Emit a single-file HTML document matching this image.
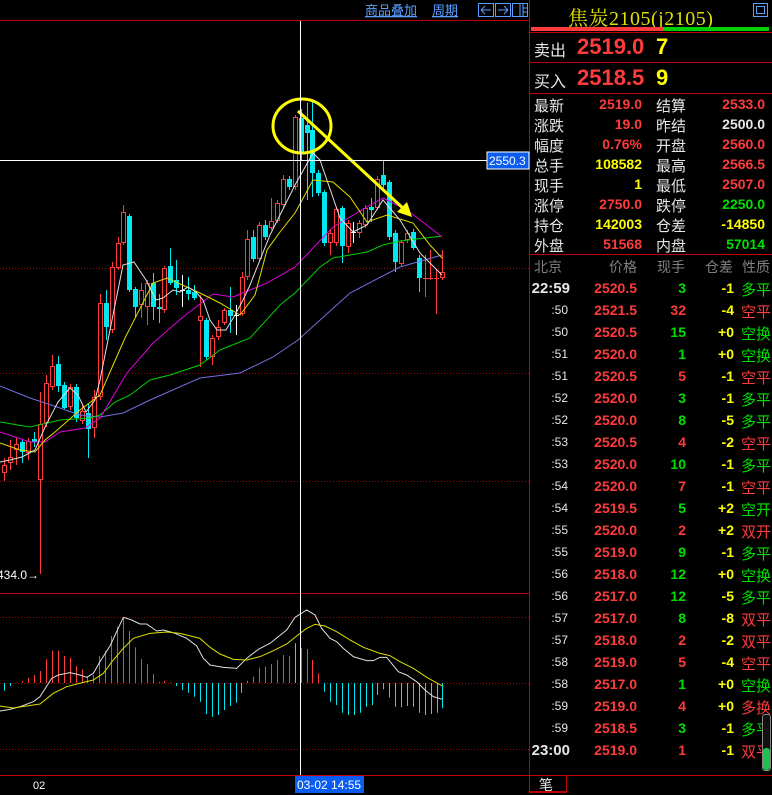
<!DOCTYPE html>
<html><head><meta charset="utf-8"><style>
*{margin:0;padding:0;box-sizing:border-box}
body{width:772px;height:793px;background:#000;overflow:hidden;position:relative;font-family:"Liberation Sans","Noto Sans CJK SC",sans-serif;color:#fff}
.a{position:absolute;white-space:nowrap}
.r{color:#ff3b3b}.g{color:#00e000}.y{color:#ffff00}.w{color:#e6e6e6}.gr{color:#808080}
.num{font-weight:bold;font-size:14px}
.lab{font-size:16px;color:#e6e6e6}
.rt{text-align:right}
</style></head><body>
<svg class="a" style="left:0;top:0" width="530" height="793" xmlns="http://www.w3.org/2000/svg">
<g font-family="Liberation Sans, Noto Sans CJK SC, sans-serif">
<text x="365" y="15" font-size="13" fill="#5aa0ff" text-decoration="underline">商品叠加</text>
<text x="432" y="15" font-size="13" fill="#5aa0ff" text-decoration="underline">周期</text>
<g fill="none" stroke="#5aa0ff" stroke-width="1">
<rect x="478.5" y="3.5" width="15" height="13"/><rect x="495.5" y="3.5" width="15" height="13"/><rect x="512.5" y="3.5" width="15" height="13"/>
<path d="M481 10h10M481 10l4-4M481 10l4 4M498 10h10M508 10l-4-4M508 10l-4 4M520 4v12M523 4v12M523 8h4M523 12h4"/>
</g>
</g>
<line x1="0" y1="20.5" x2="530" y2="20.5" stroke="#c00000"/>
<line x1="529.5" y1="0" x2="529.5" y2="793" stroke="#c00000"/>
<g stroke="#a00000" stroke-dasharray="1,2">
<line x1="0" y1="268.5" x2="529" y2="268.5"/><line x1="0" y1="373.5" x2="529" y2="373.5"/><line x1="0" y1="481.5" x2="529" y2="481.5"/>
<line x1="0" y1="617.5" x2="529" y2="617.5"/><line x1="0" y1="683.5" x2="529" y2="683.5"/><line x1="0" y1="749.5" x2="529" y2="749.5"/>
</g>
<line x1="0" y1="593.5" x2="529" y2="593.5" stroke="#c00000"/>
<line x1="0" y1="775.5" x2="529" y2="775.5" stroke="#c00000"/>
<g id="mb"></g>
<g id="cd"></g>
<g fill="none" stroke-width="1">
<polyline stroke="#7070e0" points="0,386 30,398 60,408 80,415 100,417 123,413 150,400 200,378 240,373 273,357 298,340 350,293 400,267 442,255"/>
<polyline stroke="#00d000" points="0,422 30,427 60,420 90,418 100,415 115,402 130,395 150,380 170,375 200,365 220,350 250,338 280,305 295,293 320,267 333,258 367,252 383,245 400,241 442,236"/>
<polyline stroke="#e000e0" points="0,432 30,442 45,442 60,432 85,428 100,418 127,373 153,343 183,317 213,294 233,297 267,283 295,267 333,227 367,207 383,198 407,210 442,237"/>
<polyline stroke="#e0e000" points="0,443 20,450 35,452 45,440 55,432 80,410 100,395 110,372 125,338 153,283 167,278 200,293 220,303 240,315 255,295 267,250 280,232 295,213 313,180 333,182 350,197 367,222 387,215 413,223 430,245 442,258"/>
<polyline stroke="#e0e0e0" points="0,462 10,460 22,457 35,450 46,425 58,402 70,388 78,395 86,412 95,400 100,380 110,330 123,265 134,262 146,280 156,300 163,298 173,290 180,292 188,287 196,292 203,300 210,320 217,330 226,330 235,315 243,300 250,285 260,260 270,235 280,215 295,185 313,153 320,160 340,218 353,232 367,225 383,200 400,220 420,253 442,275"/>
<g transform="translate(0,560) scale(0.33333)">
<polyline vector-effect="non-scaling-stroke" stroke="#e0e0e0" points="0,453 30,448 60,440 100,425 120,410 155,355 175,345 210,338 240,345 260,352 280,340 300,305 330,258 370,172 395,180 420,192 440,192 470,213 490,210 520,218 560,235 590,258 610,295 630,315 670,322 710,325 740,295 775,268 810,250 860,210 885,172 920,150 945,165 965,205 990,235 1010,245 1030,265 1060,290 1100,302 1120,302 1140,292 1160,292 1195,335 1220,345 1250,365 1275,390 1300,410 1327,418"/>
<polyline vector-effect="non-scaling-stroke" stroke="#e0e000" points="0,438 40,444 80,438 120,432 160,400 200,380 250,367 280,360 310,340 340,300 370,265 400,235 450,220 500,216 540,220 600,235 630,262 660,282 700,298 740,300 780,290 820,272 860,252 890,228 920,205 945,193 975,198 1010,215 1050,240 1090,262 1140,280 1170,287 1200,305 1240,325 1280,352 1327,378"/>
</g>
</g>
<ellipse cx="302" cy="126" rx="29" ry="27" fill="none" stroke="#ffff00" stroke-width="3"/>
<line x1="298" y1="111" x2="405" y2="210" stroke="#ffff00" stroke-width="3"/>
<polygon points="412,217 397,212 407,202" fill="#ffff00"/>
<line x1="300.5" y1="21" x2="300.5" y2="775" stroke="#fff"/>
<line x1="0" y1="160.5" x2="487" y2="160.5" stroke="#fff"/>
<rect x="487" y="152" width="42" height="17" fill="#0a5cf0" stroke="#fff"/>
<text x="489" y="165" font-size="12" fill="#fff" font-family="Liberation Sans, sans-serif">2550.3</text>
<text x="-3" y="579" font-size="12" fill="#fff" font-family="Liberation Sans, sans-serif">434.0→</text>
<text x="33" y="789" font-size="11" fill="#fff" font-family="Liberation Sans, sans-serif">02</text>
<rect x="295" y="776" width="69" height="17" fill="#0a5cf0"/>
<text x="297" y="789" font-size="12" fill="#fff" font-family="Liberation Sans, sans-serif">03-02 14:55</text>
</svg>

<div class="a" style="left:568px;top:2px;font-size:20px;color:#e0e000;font-family:'Liberation Serif','Noto Serif CJK SC',serif;letter-spacing:0.5px">焦炭2105(j2105)</div>
<div class="a" style="left:753px;top:3px;width:15px;height:14px;border:1px solid #5aa0ff"><div style="margin:2px;width:9px;height:8px;border:1px solid #5aa0ff"></div></div>
<div class="a" style="left:531px;top:27px;width:132px;height:4px;background:#ff3b3b"></div>
<div class="a" style="left:663px;top:27px;width:106px;height:4px;background:#00d000"></div>
<div class="a" style="left:530px;top:32px;width:242px;height:1px;background:#c00000"></div>
<div class="a" style="left:530px;top:62px;width:242px;height:1px;background:#c00000"></div>
<div class="a" style="left:530px;top:93px;width:242px;height:1px;background:#c00000"></div>
<div class="a" style="left:530px;top:254px;width:242px;height:1px;background:#c00000"></div>
<div class="a lab" style="left:534px;top:37px">卖出</div>
<div class="a r" style="left:577px;top:34px;font-size:22px;font-weight:bold">2519.0</div>
<div class="a y" style="left:656px;top:34px;font-size:22px;font-weight:bold">7</div>
<div class="a lab" style="left:534px;top:68px">买入</div>
<div class="a r" style="left:577px;top:65px;font-size:22px;font-weight:bold">2518.5</div>
<div class="a y" style="left:656px;top:65px;font-size:22px;font-weight:bold">9</div>
<div id="info"></div>
<div class="a gr" style="left:534px;top:257px;font-size:14px">北京</div>
<div class="a gr" style="left:609px;top:257px;font-size:14px">价格</div>
<div class="a gr" style="left:657px;top:257px;font-size:14px">现手</div>
<div class="a gr" style="left:705px;top:257px;font-size:14px">仓差</div>
<div class="a gr" style="left:742px;top:257px;font-size:14px">性质</div>
<div id="trades"></div>
<div class="a" style="left:762px;top:714px;width:9px;height:57px;border:1px solid #888;border-radius:3px;background:#111"></div>
<div class="a" style="left:763px;top:748px;width:7px;height:22px;border-radius:3px;background:#20c050"></div>
<div class="a" style="left:530px;top:775px;width:242px;height:1px;background:#c00000"></div>
<div class="a" style="left:566px;top:775px;width:1px;height:18px;background:#c00000"></div>
<div class="a" style="left:530px;top:791px;width:36px;height:2px;background:#c00000"></div>
<div class="a w" style="left:539px;top:775px;font-size:14px">笔</div>

<script>
var C=[[4,465,473,458,481,'r'],[10,457,463,440,470,'r'],[16,444,450,438,465,'r'],[22,442,452,440,463,'c'],[28,441,453,438,460,'r'],[34,439,442,432,447,'c'],[40,424,480,392,574,'r'],[46,383,423,375,427,'r'],[52,366,387,355,390,'r'],[58,364,386,356,392,'c'],[64,385,408,382,410,'c'],[70,387,407,384,410,'r'],[76,387,418,384,422,'c'],[82,411,421,405,424,'r'],[88,413,429,404,458,'c'],[94,397,428,390,438,'r'],[100,303,397,294,400,'r'],[106,303,327,290,340,'c'],[112,267,330,262,333,'r'],[118,243,268,237,270,'r'],[123,212,243,205,245,'r'],[129,216,290,214,292,'c'],[135,289,307,287,318,'c'],[141,290,305,283,318,'r'],[147,283,307,280,325,'r'],[153,283,307,273,320,'c'],[159,307,309,294,323,'c'],[164,268,310,266,313,'r'],[170,266,283,248,285,'c'],[176,280,288,260,295,'c'],[182,290,291,275,307,'w'],[188,290,294,277,300,'c'],[194,292,298,285,300,'c'],[200,316,321,295,367,'r'],[206,320,357,318,360,'c'],[212,338,357,335,365,'r'],[218,327,337,320,340,'r'],[224,310,323,308,325,'r'],[230,310,316,287,333,'c'],[236,315,316,305,335,'w'],[242,277,314,272,316,'r'],[247,239,277,230,280,'r'],[253,237,259,230,262,'c'],[259,225,259,222,262,'r'],[265,225,237,220,240,'c'],[271,221,228,198,230,'r'],[277,203,221,200,223,'r'],[283,179,205,175,207,'r'],[289,179,187,176,190,'c'],[295,117,187,115,190,'r'],[301,118,153,109,160,'c'],[307,125,133,103,200,'c'],[312,130,173,102,197,'c'],[318,173,193,170,196,'c'],[324,192,243,190,246,'c'],[330,233,243,230,255,'r'],[336,209,243,207,246,'r'],[342,208,246,206,263,'c'],[348,223,247,220,253,'r'],[353,232,233,222,243,'w'],[359,223,233,220,238,'r'],[365,208,225,205,228,'r'],[371,207,210,198,222,'c'],[377,179,208,176,210,'r'],[383,175,185,161,188,'c'],[389,182,237,180,240,'c'],[395,233,262,230,272,'c'],[401,242,264,240,266,'r'],[407,233,240,230,243,'r'],[413,232,248,229,250,'c'],[419,258,278,255,292,'c'],[425,278,279,255,297,'r'],[430,278,279,250,280,'r'],[436,278,279,270,314,'r'],[442,272,278,250,280,'r']];
var s='';C.forEach(function(c){var x=c[0],col=c[5]=='r'?'#ff3b3b':c[5]=='c'?'#00e8f0':'#ffffff';
s+='<line x1="'+(x+.5)+'" y1="'+c[3]+'" x2="'+(x+.5)+'" y2="'+c[4]+'" stroke="'+col+'"/>';
var h=c[2]-c[1];if(h<2){s+='<line x1="'+(x-2)+'" y1="'+(c[1]+.5)+'" x2="'+(x+3)+'" y2="'+(c[1]+.5)+'" stroke="'+col+'"/>';}
else if(c[5]=='r'){s+='<rect x="'+(x-1.5)+'" y="'+(c[1]+.5)+'" width="4" height="'+(h-1)+'" fill="#000" stroke="'+col+'"/>';}
else{s+='<rect x="'+(x-2)+'" y="'+c[1]+'" width="5" height="'+h+'" fill="'+col+'"/>';}});
document.getElementById('cd').innerHTML=s;
var M=[[13,392],[31,378],[49,368],[67,363],[85,353],[103,345],[120,333],[138,298],[156,272],[174,272],[191,288],[209,293],[227,318],[245,328],[262,350],[280,345],[298,288],[316,272],[334,228],[352,200],[369,172],[387,213],[405,262],[422,297],[440,313],[458,342],[476,366],[493,362],[511,367],[529,378],[547,390],[564,398],[582,410],[600,425],[618,462],[636,470],[654,465],[671,450],[689,438],[707,428],[724,398],[742,362],[760,350],[778,323],[795,320],[813,312],[831,300],[849,285],[867,287],[885,250],[902,263],[920,267],[937,300],[955,340],[972,395],[990,425],[1008,435],[1026,458],[1043,465],[1061,465],[1079,458],[1097,440],[1115,435],[1132,405],[1150,388],[1168,412],[1186,440],[1203,442],[1221,438],[1239,440],[1257,458],[1274,465],[1292,462],[1310,458],[1327,445]];
s='';M.forEach(function(m){var x=Math.round(m[0]/3)+.5,y=560+m[1]/3,col=(y<683&&m[0]!=885)?'#ff3b3b':'#00e8f0';
s+='<line x1="'+x+'" y1="683" x2="'+x+'" y2="'+y.toFixed(1)+'" stroke="'+col+'"/>';});
document.getElementById('mb').innerHTML=s;
var I=[['最新','2519.0','r','结算','2533.0','r'],['涨跌','19.0','r','昨结','2500.0','w'],['幅度','0.76%','r','开盘','2560.0','r'],['总手','108582','y','最高','2566.5','r'],['现手','1','y','最低','2507.0','r'],['涨停','2750.0','r','跌停','2250.0','g'],['持仓','142003','y','仓差','-14850','y'],['外盘','51568','r','内盘','57014','g']];
s='';I.forEach(function(r,i){var t=95+i*20;
s+='<div class="a lab" style="left:534px;top:'+t+'px;font-size:15px">'+r[0]+'</div>';
s+='<div class="a num rt '+r[2]+'" style="left:580px;width:62px;top:'+(t+1)+'px">'+r[1]+'</div>';
s+='<div class="a lab" style="left:656px;top:'+t+'px;font-size:15px">'+r[3]+'</div>';
s+='<div class="a num rt '+r[5]+'" style="left:700px;width:65px;top:'+(t+1)+'px">'+r[4]+'</div>';});
document.getElementById('info').innerHTML=s;
var T=[['22:59','2520.5','3','g','-1','多平','g'],[':50','2521.5','32','r','-4','空平','r'],[':50','2520.5','15','g','+0','空换','g'],[':51','2520.0','1','g','+0','空换','g'],[':51','2520.5','5','r','-1','空平','r'],[':52','2520.0','3','g','-1','多平','g'],[':52','2520.0','8','g','-5','多平','g'],[':53','2520.5','4','r','-2','空平','r'],[':53','2520.0','10','g','-1','多平','g'],[':54','2520.0','7','r','-1','空平','r'],[':54','2519.5','5','g','+2','空开','g'],[':55','2520.0','2','r','+2','双开','r'],[':55','2519.0','9','g','-1','多平','g'],[':56','2518.0','12','g','+0','空换','g'],[':56','2517.0','12','g','-5','多平','g'],[':57','2517.0','8','g','-8','双平','r'],[':57','2518.0','2','r','-2','双平','r'],[':58','2519.0','5','r','-4','空平','r'],[':58','2517.0','1','g','+0','空换','g'],[':59','2519.0','4','r','+0','多换','r'],[':59','2518.5','3','g','-1','多平','g'],['23:00','2519.0','1','r','-1','双平','r']];
s='';T.forEach(function(r,i){var t=280+i*22,big=r[0].length>3;
s+='<div class="a rt w" style="left:530px;width:'+(big?40:38)+'px;top:'+(big?t:t+1)+'px;font-size:'+(big?'15px;font-weight:bold':'12px')+'">'+r[0]+'</div>';
s+='<div class="a num rt r" style="left:580px;width:57px;top:'+t+'px">'+r[1]+'</div>';
s+='<div class="a num rt '+r[3]+'" style="left:650px;width:36px;top:'+t+'px">'+r[2]+'</div>';
s+='<div class="a num rt y" style="left:700px;width:34px;top:'+t+'px">'+r[4]+'</div>';
s+='<div class="a '+r[6]+'" style="left:741px;top:'+(t-1)+'px;font-size:15px">'+r[5]+'</div>';});
document.getElementById('trades').innerHTML=s;
</script>
</body></html>
